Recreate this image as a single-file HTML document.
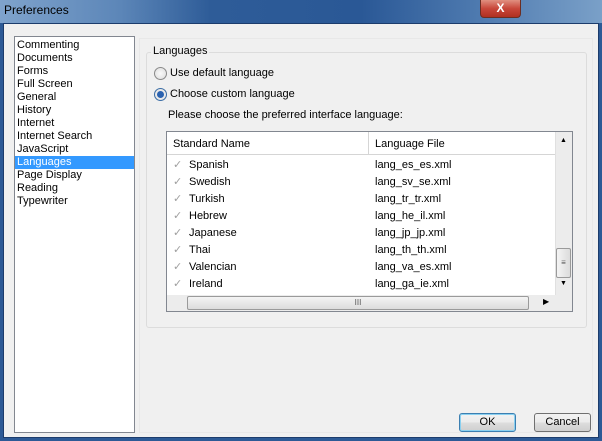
<!DOCTYPE html>
<html><head><style>
*{margin:0;padding:0;box-sizing:border-box}
body{width:602px;height:441px;position:relative;overflow:hidden;font-family:"Liberation Sans",sans-serif;font-size:11px;color:#000;background:#2d5a96}
.abs{position:absolute}
#title{left:0;top:0;width:602px;height:23px;background:linear-gradient(90deg,#7fa3cc 0%,#5c86b8 20%,#2e5c98 35%,#2a5896 60%,#4f7bb0 80%,#7aa0c8 100%)}
#title span{position:absolute;left:4px;top:3px;font-size:12px;color:#000}
#close{left:480px;top:0;width:41px;height:18px;border:1px solid #6b2e22;border-top:none;border-radius:0 0 4px 4px;background:linear-gradient(#e09080,#c8473a 50%,#b03020);color:#fff;font-weight:bold;text-align:center;font-size:12px;line-height:16px}
#client{left:3px;top:23px;width:596px;height:415px;background:#f0f0f0;border:1px solid #1c3c6c}
.list{left:14px;top:36px;width:121px;height:397px;background:#fff;border:1px solid #828790}
.list div{height:13px;line-height:13px;padding-left:2px;font-size:11px}
.sel{background:#3399ff;color:#fff}
.grp{left:146px;top:52px;width:441px;height:276px;border:1px solid #dcdcdc;border-radius:3px}
.tbl{left:166px;top:131px;width:407px;height:181px;background:#fff;border:1px solid #828790}
.row{position:absolute;left:0;height:17px;line-height:19px;width:388px}
.chk{color:#a0a0a0;position:absolute;left:6px}
.btn{height:19px;border:1px solid #707070;border-radius:3px;background:linear-gradient(#f2f2f2,#ebebeb 50%,#dddddd 51%,#cfcfcf);text-align:center;line-height:17px;font-size:11px}
.radio{width:13px;height:13px;border-radius:50%;border:1px solid #8a8a8a;background:radial-gradient(#fafafa,#dcdcdc)}
</style></head><body>
<div id="title" class="abs"><span>Preferences</span></div>
<div id="close" class="abs">X</div>
<div id="client" class="abs"></div>
<div class="abs" style="left:139px;top:38px;width:454px;height:395px;border:1px solid #e8e8e8;background:#f0f0f0"></div>
<div class="abs list">
<div style="margin-top:2px">Commenting</div><div>Documents</div><div>Forms</div><div>Full Screen</div><div>General</div><div>History</div><div>Internet</div><div>Internet Search</div><div>JavaScript</div><div class="sel">Languages</div><div>Page Display</div><div>Reading</div><div>Typewriter</div>
</div>
<div class="abs grp"></div>
<div class="abs" style="left:151px;top:45px;background:#f0f0f0;padding:0 2px;font-size:11px">Languages</div>
<div class="abs radio" style="left:154px;top:67px"></div>
<div class="abs" style="left:170px;top:67px">Use default language</div>
<div class="abs radio" style="left:154px;top:88px;border-color:#3c6ea6"><div style="width:7px;height:7px;border-radius:50%;background:#2a62b0;margin:2px"></div></div>
<div class="abs" style="left:170px;top:88px">Choose custom language</div>
<div class="abs" style="left:168px;top:109px">Please choose the preferred interface language:</div>
<div class="abs tbl">
 <div class="abs" style="left:0;top:0;width:388px;height:23px;border-bottom:1px solid #d5d5d5;background:#fff"></div>
 <div class="abs" style="left:201px;top:0;width:1px;height:23px;background:#d5d5d5"></div>
 <div class="abs" style="left:6px;top:6px">Standard Name</div>
 <div class="abs" style="left:208px;top:6px">Language File</div>
 <div class="row" style="top:24px"><span class="chk">✓</span><span style="position:absolute;left:22px">Spanish</span><span style="position:absolute;left:208px">lang_es_es.xml</span></div>
 <div class="row" style="top:41px"><span class="chk">✓</span><span style="position:absolute;left:22px">Swedish</span><span style="position:absolute;left:208px">lang_sv_se.xml</span></div>
 <div class="row" style="top:58px"><span class="chk">✓</span><span style="position:absolute;left:22px">Turkish</span><span style="position:absolute;left:208px">lang_tr_tr.xml</span></div>
 <div class="row" style="top:75px"><span class="chk">✓</span><span style="position:absolute;left:22px">Hebrew</span><span style="position:absolute;left:208px">lang_he_il.xml</span></div>
 <div class="row" style="top:92px"><span class="chk">✓</span><span style="position:absolute;left:22px">Japanese</span><span style="position:absolute;left:208px">lang_jp_jp.xml</span></div>
 <div class="row" style="top:109px"><span class="chk">✓</span><span style="position:absolute;left:22px">Thai</span><span style="position:absolute;left:208px">lang_th_th.xml</span></div>
 <div class="row" style="top:126px"><span class="chk">✓</span><span style="position:absolute;left:22px">Valencian</span><span style="position:absolute;left:208px">lang_va_es.xml</span></div>
 <div class="row" style="top:143px"><span class="chk">✓</span><span style="position:absolute;left:22px">Ireland</span><span style="position:absolute;left:208px">lang_ga_ie.xml</span></div>
 <div class="abs" style="left:388px;top:0;width:17px;height:163px;background:#ececec;border-left:1px solid #e0e0e0"></div>
 <div class="abs" style="left:393px;top:5px;font-size:7px">▲</div>
 <div class="abs" style="left:393px;top:148px;font-size:7px">▼</div>
 <div class="abs" style="left:389px;top:116px;width:15px;height:30px;border:1px solid #9a9a9a;border-radius:2px;background:linear-gradient(90deg,#f4f4f4,#dcdcdc);font-size:8px;text-align:center;line-height:28px;color:#555">≡</div>
 <div class="abs" style="left:0;top:163px;width:405px;height:16px;background:#ececec"></div>
 <div class="abs" style="left:20px;top:164px;width:342px;height:14px;border:1px solid #9a9a9a;border-radius:2px;background:linear-gradient(#f4f4f4,#dcdcdc);font-size:8px;text-align:center;line-height:12px;color:#555">III</div>
 <div class="abs" style="left:376px;top:165px;font-size:8px">▶</div>
</div>
<div class="abs btn" style="left:459px;top:413px;width:57px;border-color:#3c7fb1;box-shadow:inset 0 0 0 1px #8ad0f0">OK</div>
<div class="abs btn" style="left:534px;top:413px;width:57px">Cancel</div>
</body></html>
